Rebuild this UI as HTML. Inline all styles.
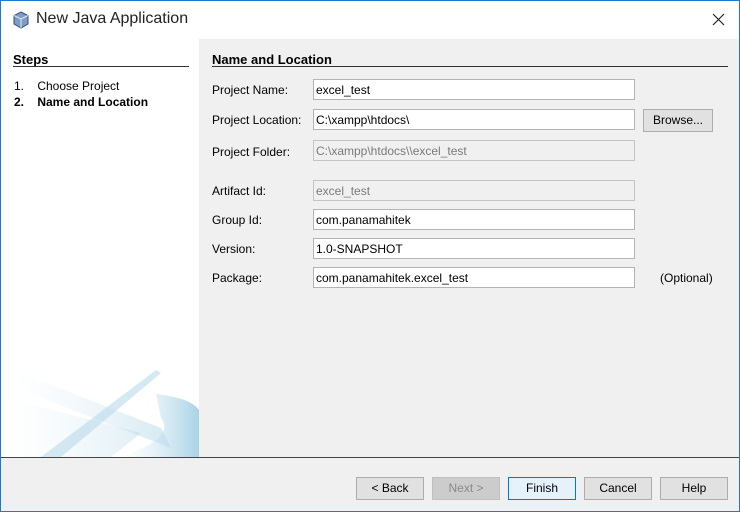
<!DOCTYPE html><html><head><style>
body{margin:0;width:740px;height:512px;overflow:hidden;font-family:"Liberation Sans",sans-serif;font-size:12px;color:#000;}
.win{position:absolute;left:0;top:0;width:738px;height:511px;border:1px solid #1c7ad2;border-top:none;background:#f0f0f0;}
.title{position:absolute;left:0;top:0;width:738px;height:38px;background:#fff;border-top:1px solid #1c7ad2;}
.title span{position:absolute;left:35px;top:9px;font-size:16px;color:#222;}
.left{position:absolute;left:0;top:38px;width:198px;height:419px;background:#fff;overflow:hidden;}
.t{position:absolute;white-space:nowrap;}
.in{position:absolute;left:312px;width:322px;height:21px;border:1px solid #b4b4b4;background:#fff;box-sizing:border-box;padding:3px 2px;white-space:nowrap;}
.dis{background:#f0f0f0;color:#7a7a7a;border-color:#c4c4c4;}
.btn{position:absolute;top:477px;width:68px;height:23px;border:1px solid #adadad;background:#e1e1e1;box-sizing:border-box;text-align:center;line-height:21px;}
</style></head><body><div class="win">
<div class="title">
<svg style="position:absolute;left:12px;top:10px" width="16" height="18" viewBox="0 0 16 18"><path d="M8 1L15 4.5V13L8 17L1 13V4.5Z" fill="#7d9cc6" stroke="#2f4f7f"/><path d="M1 4.5L8 8L15 4.5M8 8V17" fill="none" stroke="#dfe8f5"/></svg>
<span>New Java Application</span>
<svg style="position:absolute;left:711px;top:12px" width="13" height="13"><path d="M1 1L12 12M12 1L1 12" stroke="#222" stroke-width="1.2"/></svg>
</div>
<div class="left">
<svg width="198" height="419" style="position:absolute;left:0;top:0"><defs><linearGradient id="g" x1="0" x2="1"><stop offset="0" stop-color="#d4e9f3" stop-opacity="0"/><stop offset="1" stop-color="#a9d3e6"/></linearGradient></defs>
<path d="M12 332 L160 390 L170 410 L15 350Z" fill="url(#g)" opacity=".5"/>
<path d="M40 419 L155 332 L160 335 L60 419Z" fill="#b8dbea" opacity=".6"/>
<path d="M155 356 Q190 360 198 372 L198 419 L120 419 Q175 400 160 380Z" fill="url(#g)"/>
<path d="M5 360 L140 395 L110 419 L5 419Z" fill="url(#g)" opacity=".35"/>
</svg>
<div class="t" style="left:12px;top:14px;font-weight:bold;font-size:13px">Steps</div>
<div style="position:absolute;left:12px;top:28px;width:176px;height:1px;background:#333"></div>
<div class="t" style="left:13px;top:41px">1.&nbsp;&nbsp;&nbsp;&nbsp;Choose Project</div>
<div class="t" style="left:13px;top:57px;font-weight:bold">2.&nbsp;&nbsp;&nbsp;&nbsp;Name and Location</div>
</div>
<div class="t" style="left:211px;top:52px;font-weight:bold;font-size:13px">Name and Location</div>
<div style="position:absolute;left:211px;top:66px;width:516px;height:1px;background:#333"></div>
<div class="t" style="left:211px;top:83px">Project Name:</div><div class="in" style="top:79px">excel_test</div>
<div class="t" style="left:211px;top:113px">Project Location:</div><div class="in" style="top:109px">C:\xampp\htdocs\</div>
<div class="btn" style="left:642px;top:109px;width:70px">Browse...</div>
<div class="t" style="left:211px;top:145px">Project Folder:</div><div class="in dis" style="top:140px">C:\xampp\htdocs\\excel_test</div>
<div class="t" style="left:211px;top:184px">Artifact Id:</div><div class="in dis" style="top:180px">excel_test</div>
<div class="t" style="left:211px;top:213px">Group Id:</div><div class="in" style="top:209px">com.panamahitek</div>
<div class="t" style="left:211px;top:242px">Version:</div><div class="in" style="top:238px">1.0-SNAPSHOT</div>
<div class="t" style="left:211px;top:271px">Package:</div><div class="in" style="top:267px">com.panamahitek.excel_test</div>
<div class="t" style="left:659px;top:271px">(Optional)</div>
<div style="position:absolute;left:0;top:457px;width:738px;height:1px;background:#444"></div>
<div class="btn" style="left:355px">&lt; Back</div>
<div class="btn" style="left:431px;color:#8a8a8a;background:#ccc;border-color:#bfbfbf">Next &gt;</div>
<div class="btn" style="left:507px;border:1px solid #0078d7;background:#e5f1fb">Finish</div>
<div class="btn" style="left:583px">Cancel</div>
<div class="btn" style="left:659px">Help</div>
</div></body></html>
